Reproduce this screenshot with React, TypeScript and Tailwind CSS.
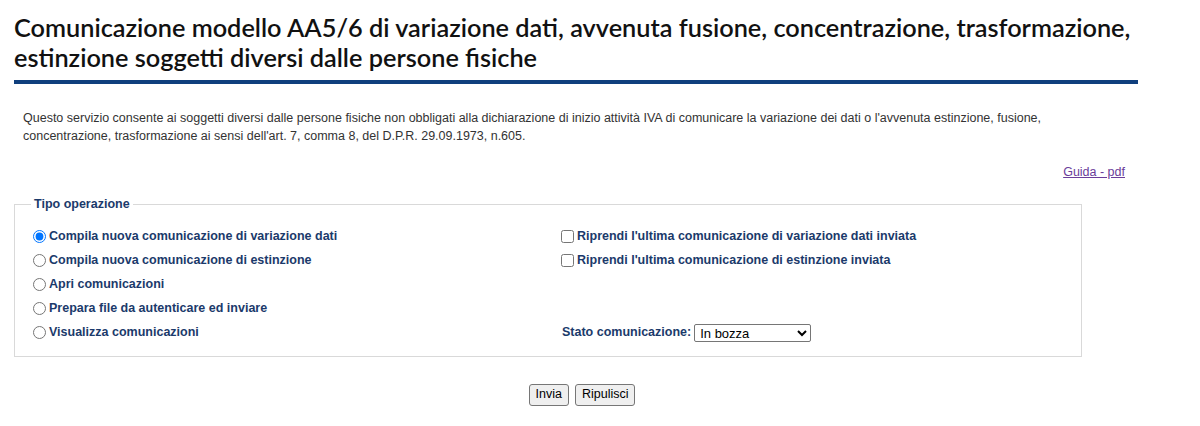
import { useState } from "react";

const leftOptions = [
  "Compila nuova comunicazione di variazione dati",
  "Compila nuova comunicazione di estinzione",
  "Apri comunicazioni",
  "Prepara file da autenticare ed inviare",
  "Visualizza comunicazioni",
];

export default function App() {
  const [op, setOp] = useState(0);
  const [stato, setStato] = useState("bozza");

  return (
    <div className="min-h-[426px] bg-white font-['Liberation_Sans',Arial,sans-serif] text-[12.5px]">
      {/* title */}
      <div className="ml-[14px] w-[1124px] pt-[12px]">
        <h1 className="font-['Lato',sans-serif] text-[25.3px] font-semibold leading-[30px] text-[#111]">
          Comunicazione modello AA5/6 di variazione dati, avvenuta fusione, concentrazione, trasformazione,
          estinzione soggetti diversi dalle persone fisiche
        </h1>
        <div className="mt-[8px] h-[4px] bg-[#0f3f7d]" />
      </div>

      <p className="ml-[23px] mt-[25px] w-[1060px] leading-[18px] text-[#333]">
        Questo servizio consente ai soggetti diversi dalle persone fisiche non obbligati alla dichiarazione di inizio
        attività IVA di comunicare la variazione dei dati o l'avvenuta estinzione, fusione, concentrazione,
        trasformazione ai sensi dell'art. 7, comma 8, del D.P.R. 29.09.1973, n.605.
      </p>

      <div className="mt-[18px] flex w-[1125px] justify-end">
        <a href="#" className="text-[#6a3d9a] underline">
          Guida - pdf
        </a>
      </div>

      <fieldset className="ml-[14px] mt-[13px] w-[1068px] border border-[#d9d9d9] pb-[11px] pl-[14px]">
        <legend className="ml-[2px] px-[3px] font-bold text-[#1b3a6b]">Tipo operazione</legend>
        <div className="mt-[11px] grid grid-cols-[532px_1fr] auto-rows-[24px] font-bold text-[#1b3a6b]">
          {leftOptions.map((label, i) => (
            <div key={label} className="contents">
              <label className="flex items-center">
                <input
                  type="radio"
                  name="op"
                  checked={op === i}
                  onChange={() => setOp(i)}
                  className="ml-[4px] mr-[3px] h-[13px] w-[13px]"
                />
                {label}
              </label>
              <div className="flex items-center">
                {i === 0 && (
                  <label className="flex items-center">
                    <input type="checkbox" className="mr-[3px] h-[13px] w-[13px]" />
                    Riprendi l'ultima comunicazione di variazione dati inviata
                  </label>
                )}
                {i === 1 && (
                  <label className="flex items-center">
                    <input type="checkbox" className="mr-[3px] h-[13px] w-[13px]" />
                    Riprendi l'ultima comunicazione di estinzione inviata
                  </label>
                )}
                {i === 4 && (
                  <label className="ml-[1px] flex items-center">
                    Stato comunicazione:
                    <select
                      value={stato}
                      onChange={(e) => setStato(e.target.value)}
                      className="ml-[3px] h-[18px] w-[117px] rounded-[2px] border border-[#767676] bg-white pl-[1px] font-normal text-[13px] leading-none text-black"
                    >
                      <option value="bozza">In bozza</option>
                      <option value="inviata">Inviata</option>
                    </select>
                  </label>
                )}
              </div>
            </div>
          ))}
        </div>
      </fieldset>

      <div className="mt-[27px] flex w-[1164px] justify-center gap-[6px]">
        <button className="h-[22px] rounded-[3px] border border-[#767676] bg-[#efefef] px-[6px] text-[12.5px] text-black">
          Invia
        </button>
        <button className="h-[22px] rounded-[3px] border border-[#767676] bg-[#efefef] px-[6px] text-[12.5px] text-black">
          Ripulisci
        </button>
      </div>
    </div>
  );
}
